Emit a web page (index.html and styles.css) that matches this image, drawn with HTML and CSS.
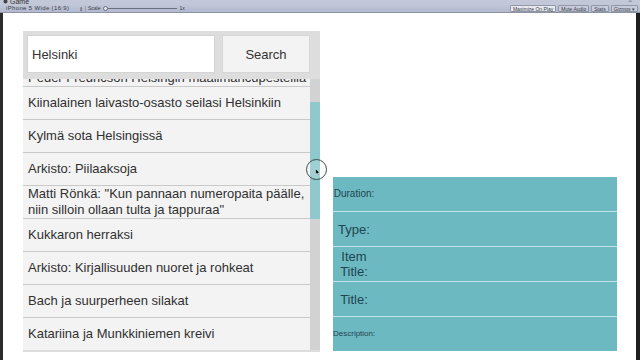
FILE: index.html
```html
<!DOCTYPE html>
<html lang="fi">
<head>
<meta charset="utf-8">
<title>Game</title>
<link rel="stylesheet" href="styles.css">
</head>
<body>
<div class="window">
  <div class="tabbar">
    <span class="tab"><svg class="tab-icon" width="5" height="5" viewBox="0 0 5 5"><circle cx="2.5" cy="2.5" r="2" fill="#444"/></svg>Game</span>
    <span class="tab-menu">≡</span>
  </div>
  <div class="toolbar">
    <span class="tb-label tb-device">iPhone 5 Wide (16:9)</span>
    <span class="tb-arrow">⇕</span>
    <span class="tb-label">Scale</span>
    <span class="slider"><span class="knob"></span></span>
    <span class="tb-label">1x</span>
    <span class="tb-spacer"></span>
    <span class="tb-btn tb-on">Maximize On Play</span>
    <span class="tb-btn">Mute Audio</span>
    <span class="tb-btn">Stats</span>
    <span class="tb-btn">Gizmos ▾</span>
  </div>
  <div class="viewport">
    <div class="edge edge-left"></div>
    <div class="game">
      <div class="search-panel">
        <div class="search-row">
          <div class="search-input">Helsinki</div>
          <div class="search-button">Search</div>
        </div>
        <div class="list">
          <div class="list-items">
            <div class="item item-cut">Peder Fredricson Helsingin maailmancupesteillä</div>
            <div class="item">Kiinalainen laivasto-osasto seilasi Helsinkiin</div>
            <div class="item">Kylmä sota Helsingissä</div>
            <div class="item">Arkisto: Piilaaksoja</div>
            <div class="item">Matti Rönkä: "Kun pannaan numeropaita päälle,<br>niin silloin ollaan tulta ja tappuraa"</div>
            <div class="item">Kukkaron herraksi</div>
            <div class="item">Arkisto: Kirjallisuuden nuoret ja rohkeat</div>
            <div class="item">Bach ja suurperheen silakat</div>
            <div class="item">Katariina ja Munkkiniemen kreivi</div>
          </div>
          <div class="scrollbar"><div class="thumb"></div></div>
        </div>
      </div>
      <div class="details">
        <div class="row"><span class="label label-xs">Duration:</span></div>
        <div class="row"><span class="label">Type:</span></div>
        <div class="row"><span class="label">Item<br>Title:</span></div>
        <div class="row"><span class="label">Title:</span></div>
        <div class="row"><span class="label label-xxs">Description:</span></div>
      </div>
      <div class="cursor">
        <svg width="6" height="8" viewBox="0 0 6 8"><path d="M0.5 0.5 L0.5 6.5 L2 5.2 L3.2 7.5 L4 7.1 L2.9 4.9 L5 4.9 Z" fill="#111" stroke="#fff" stroke-width="0.5"/></svg>
      </div>
    </div>
    <div class="edge edge-right"></div>
  </div>
</div>
</body>
</html>
```
FILE: styles.css
```css
* { box-sizing: border-box; }
html, body { margin: 0; padding: 0; background: #fff; }
body { font-family: "Liberation Sans", Arial, sans-serif; }

.window {
  width: 640px;
  height: 360px;
  display: flex;
  flex-direction: column;
  overflow: hidden;
}

/* Unity editor chrome */
.tabbar {
  height: 5px;
  background: #c3c8d9;
  display: flex;
  justify-content: space-between;
  overflow: hidden;
  font-size: 7px;
  line-height: 7px;
  color: #333;
}
.tab {
  display: flex;
  align-items: center;
  gap: 2px;
  margin-top: -3px;
  padding-left: 3px;
}
.tab-icon { display: block; }
.tab-menu {
  margin-top: -3px;
  padding-right: 8px;
  font-size: 6px;
  color: #666;
}
.toolbar {
  height: 8px;
  background: linear-gradient(#c0c5d7, #b3b9ce);
  border-bottom: 1px solid #8d92a4;
  display: flex;
  align-items: center;
  padding: 0 2px 0 6px;
  font-size: 5px;
  color: #3a3d48;
  white-space: nowrap;
}
.tb-label { line-height: 7px; }
.tb-device {
  width: 73px;
  font-size: 6px;
  letter-spacing: 0.35px;
}
.tb-arrow {
  font-size: 5px;
  width: 7px;
  border-right: 1px solid #9da2b3;
  margin-right: 2px;
}
.slider {
  position: relative;
  width: 74px;
  height: 1px;
  background: #6c7080;
  margin: 0 3px 0 2px;
}
.knob {
  position: absolute;
  left: 0;
  top: -2px;
  width: 5px;
  height: 5px;
  border-radius: 50%;
  background: #e6e8ef;
  border: 1px solid #6c7080;
}
.tb-spacer { flex: 1; }
.tb-btn {
  height: 7px;
  line-height: 6px;
  padding: 0 2px;
  border: 1px solid #9297a8;
  border-radius: 1px;
  margin-left: 2px;
  background: #c7cbdb;
}
.tb-on { background: #e8eaf1; }

.viewport {
  flex: 1;
  display: flex;
  min-height: 0;
}
.edge { background: #2b2b2b; }
.edge-left { width: 3px; }
.edge-right { width: 4px; background: #1f1f1f; }

.game {
  position: relative;
  flex: 1;
  display: flex;
  align-items: flex-start;
  background: #fff;
}

/* search panel */
.search-panel {
  margin: 18px 0 0 20px;
  width: 297px;
  height: 321px;
  background: #dddddd;
  padding: 4px 0 2px 0;
  display: flex;
  flex-direction: column;
}
.search-row {
  display: flex;
  gap: 7px;
  height: 38px;
  padding-left: 4px;
}
.search-input {
  width: 188px;
  background: #fff;
  border: 1px solid #d4d4d4;
  display: flex;
  align-items: center;
  padding-left: 4px;
  font-size: 13px;
  color: #333;
}
.search-button {
  width: 88px;
  background: #f3f3f3;
  border: 1px solid #d6d6d6;
  display: flex;
  align-items: center;
  justify-content: center;
  font-size: 13px;
  color: #333;
}
.list {
  margin-top: 6px;
  height: 271px;
  display: flex;
}
.list-items {
  width: 287px;
  overflow: hidden;
  background: #c9c9c9;
}
.item {
  height: 32px;
  margin-bottom: 1px;
  background: #f3f3f3;
  display: flex;
  align-items: center;
  padding-left: 5px;
  font-size: 13px;
  line-height: 16px;
  color: #303030;
  white-space: nowrap;
}
.item-cut {
  margin-top: -25px;
  align-items: flex-end;
}
.scrollbar {
  width: 10px;
  background: #d2d2d2;
  padding-top: 23px;
}
.thumb {
  height: 117px;
  background: #8fc9cd;
}

/* details panel */
.details {
  margin: 164px 0 0 13px;
  width: 284px;
  display: flex;
  flex-direction: column;
  gap: 1px;
  background: #c3e4e7;
}
.row {
  height: 34px;
  background: #6db9c1;
  display: flex;
  align-items: center;
}
.label {
  width: 42px;
  text-align: center;
  font-size: 13px;
  line-height: 15px;
  color: #1d4550;
}
.label-xs { font-size: 10px; line-height: 12px; }
.label-xxs { font-size: 8px; line-height: 10px; }

/* mouse cursor overlay */
.cursor {
  position: absolute;
  left: 303px;
  top: 146px;
  width: 21px;
  height: 21px;
  border-radius: 50%;
  border: 1px solid #3c4a4c;
  background: rgba(255, 255, 255, 0.15);
  display: flex;
  align-items: center;
  justify-content: center;
}
.cursor svg { display: block; margin: 4px 0 0 2px; }
```
